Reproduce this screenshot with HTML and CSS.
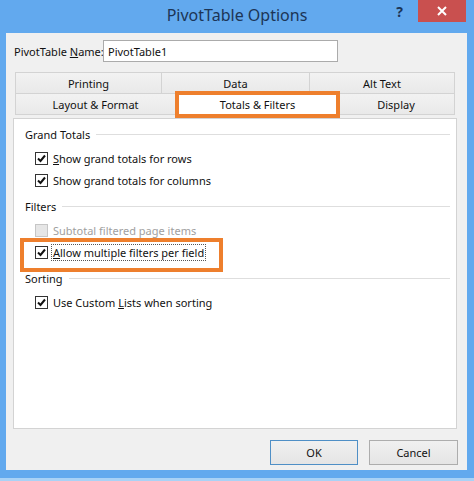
FILE: index.html
```html
<!DOCTYPE html>
<html lang="en">

<head>
    <meta charset="UTF-8" />
    <title>PivotTable Options</title>
    <link rel="stylesheet" href="styles.css">
</head>

<body>

    <div class="window">
        <div class="titlebar">
            <div></div>
            <div class="title">PivotTable Options</div>
            <div class="controls">
                <span class="help">?</span>
                <span class="close">
                    <svg width="12" height="12" viewBox="0 0 12 12">
                        <path d="M2 2 L10 10 M10 2 L2 10" stroke="#fff" stroke-width="2" />
                    </svg>
                </span>
            </div>
        </div>

        <div class="client">
            <div class="name-row">
                <label for="ptname">PivotTable <u>N</u>ame:</label>
                <input type="text" id="ptname" value="PivotTable1">
            </div>

            <div class="tabs">
                <div class="tab-row">
                    <div class="tab w1">Printing</div>
                    <div class="tab w2">Data</div>
                    <div class="tab w3">Alt Text</div>
                </div>
                <div class="tab-row">
                    <div class="tab w4">Layout &amp; Format</div>
                    <div class="tab selected">Totals &amp; Filters</div>
                    <div class="tab w5">Display</div>
                </div>
            </div>

            <div class="panel">
                <div class="group">
                    <div class="group-title"><span>Grand Totals</span><i></i></div>
                    <div class="option">
                        <span class="check on"></span>
                        <span><u>S</u>how grand totals for rows</span>
                    </div>
                    <div class="option">
                        <span class="check on"></span>
                        <span>Show grand totals for columns</span>
                    </div>
                </div>

                <div class="group">
                    <div class="group-title"><span>Filters</span><i></i></div>
                    <div class="option disabled">
                        <span class="check"></span>
                        <span>Subtotal filtered page items</span>
                    </div>
                    <div class="option highlight">
                        <span class="check on"></span>
                        <span class="focus"><u>A</u>llow multiple filters per field</span>
                    </div>
                </div>

                <div class="group">
                    <div class="group-title"><span>Sorting</span><i></i></div>
                    <div class="option">
                        <span class="check on"></span>
                        <span>Use Custom <u>L</u>ists when sorting</span>
                    </div>
                </div>
            </div>

            <div class="buttons">
                <button class="default">OK</button>
                <button>Cancel</button>
            </div>
        </div>
    </div>

</body>

</html>
```

FILE: styles.css
```css
body {
    margin: 0;
    font-family: "Noto Sans", "Open Sans", sans-serif;
    font-size: 11px;
    color: #111;
    background: #62a9ee;
    overflow: hidden;
}

.window {
    width: 474px;
    height: 481px;
    box-sizing: border-box;
    border-bottom: 3px solid #a9d2f6;
}

.titlebar {
    height: 33px;
    display: grid;
    grid-template-columns: 1fr auto 1fr;
}

.title {
    font-size: 16px;
    color: #1c3556;
    line-height: 30px;
}

.controls {
    display: flex;
    justify-content: flex-end;
    align-items: flex-start;
    margin-right: 8px;
}

.help {
    font-weight: bold;
    font-size: 14px;
    color: #1c3556;
    margin: 2px 15px 0 0;
}

.close {
    width: 48px;
    height: 22px;
    background: #c9504f;
    display: flex;
    align-items: center;
    justify-content: center;
}

.client {
    margin: 0 7px 0 6px;
    height: 437px;
    box-sizing: border-box;
    background: #f0f0f0;
    padding: 7px 10px 0 7px;
}

.name-row {
    display: flex;
    align-items: center;
    margin-left: 1px;
}

.name-row label {
    width: 89px;
    white-space: nowrap;
}

.name-row input {
    width: 235px;
    height: 22px;
    box-sizing: border-box;
    border: 1px solid #ababab;
    padding: 0 4px;
    font-family: inherit;
    font-size: 11px;
    color: #111;
}

.tabs {
    margin: 10px 2px 0 2px;
}

.tab-row {
    display: flex;
}

.tab {
    height: 22px;
    box-sizing: border-box;
    border: 1px solid #d3d3d3;
    border-left: none;
    background: linear-gradient(#f2f2f2, #e9e9e9);
    display: flex;
    align-items: center;
    justify-content: center;
}

.tab-row .tab:first-child {
    border-left: 1px solid #d3d3d3;
}

.tab-row + .tab-row .tab {
    height: 21px;
    border-top: none;
}

.w1 { width: 147px; }
.w2 { width: 148px; }
.w3 { width: 145px; }
.w4 { width: 161px; }
.w5 { width: 117px; }

.tab-row + .tab-row .tab.selected {
    width: 165px;
    height: 27px;
    margin: -3px -2px 0 -1px;
    border: 4px solid #ee7f2d;
    background: #fff;
    position: relative;
    z-index: 2;
}

.panel {
    height: 311px;
    box-sizing: border-box;
    background: #fff;
    border: 1px solid #d3d3d3;
    padding: 4px 6px 0 11px;
}

.group {
    margin-bottom: 4px;
}

.group-title {
    display: flex;
    align-items: center;
    height: 22px;
    margin-bottom: 2px;
}

.group-title i {
    flex: 1;
    border-top: 1px solid #dedede;
    margin-left: 6px;
}

.option {
    display: flex;
    align-items: center;
    height: 22px;
    margin-left: 10px;
    position: relative;
}

.option.disabled {
    color: #a0a0a0;
}

.check {
    width: 13px;
    height: 13px;
    box-sizing: border-box;
    border: 1px solid #333;
    background: #fff;
    margin-right: 5px;
}

.check.on {
    background: #fff url("data:image/svg+xml,%3Csvg xmlns='http://www.w3.org/2000/svg' width='11' height='11'%3E%3Cpath d='M2 5.5 L4.5 8 L9 2.5' fill='none' stroke='%23111' stroke-width='2'/%3E%3C/svg%3E") center no-repeat;
}

.disabled .check {
    border-color: #c6c6c6;
    background: #e6e6e6;
}

.focus {
    border: 1px dotted #555;
    padding: 0 1px;
    margin-left: -2px;
}

.highlight::after {
    content: "";
    position: absolute;
    left: -15px;
    top: -3px;
    width: 203px;
    height: 34px;
    box-sizing: border-box;
    border: 4px solid #ee7f2d;
}

.buttons {
    display: flex;
    justify-content: flex-end;
    gap: 11px;
    margin-top: 11px;
    margin-right: -1px;
}

.buttons button {
    width: 89px;
    height: 25px;
    font-family: inherit;
    font-size: 11px;
    color: #111;
    border: 1px solid #adadad;
    background: linear-gradient(#f0f0f0, #e5e5e5);
}

.buttons button.default {
    width: 88px;
    border-color: #4f8fc6;
}
```
